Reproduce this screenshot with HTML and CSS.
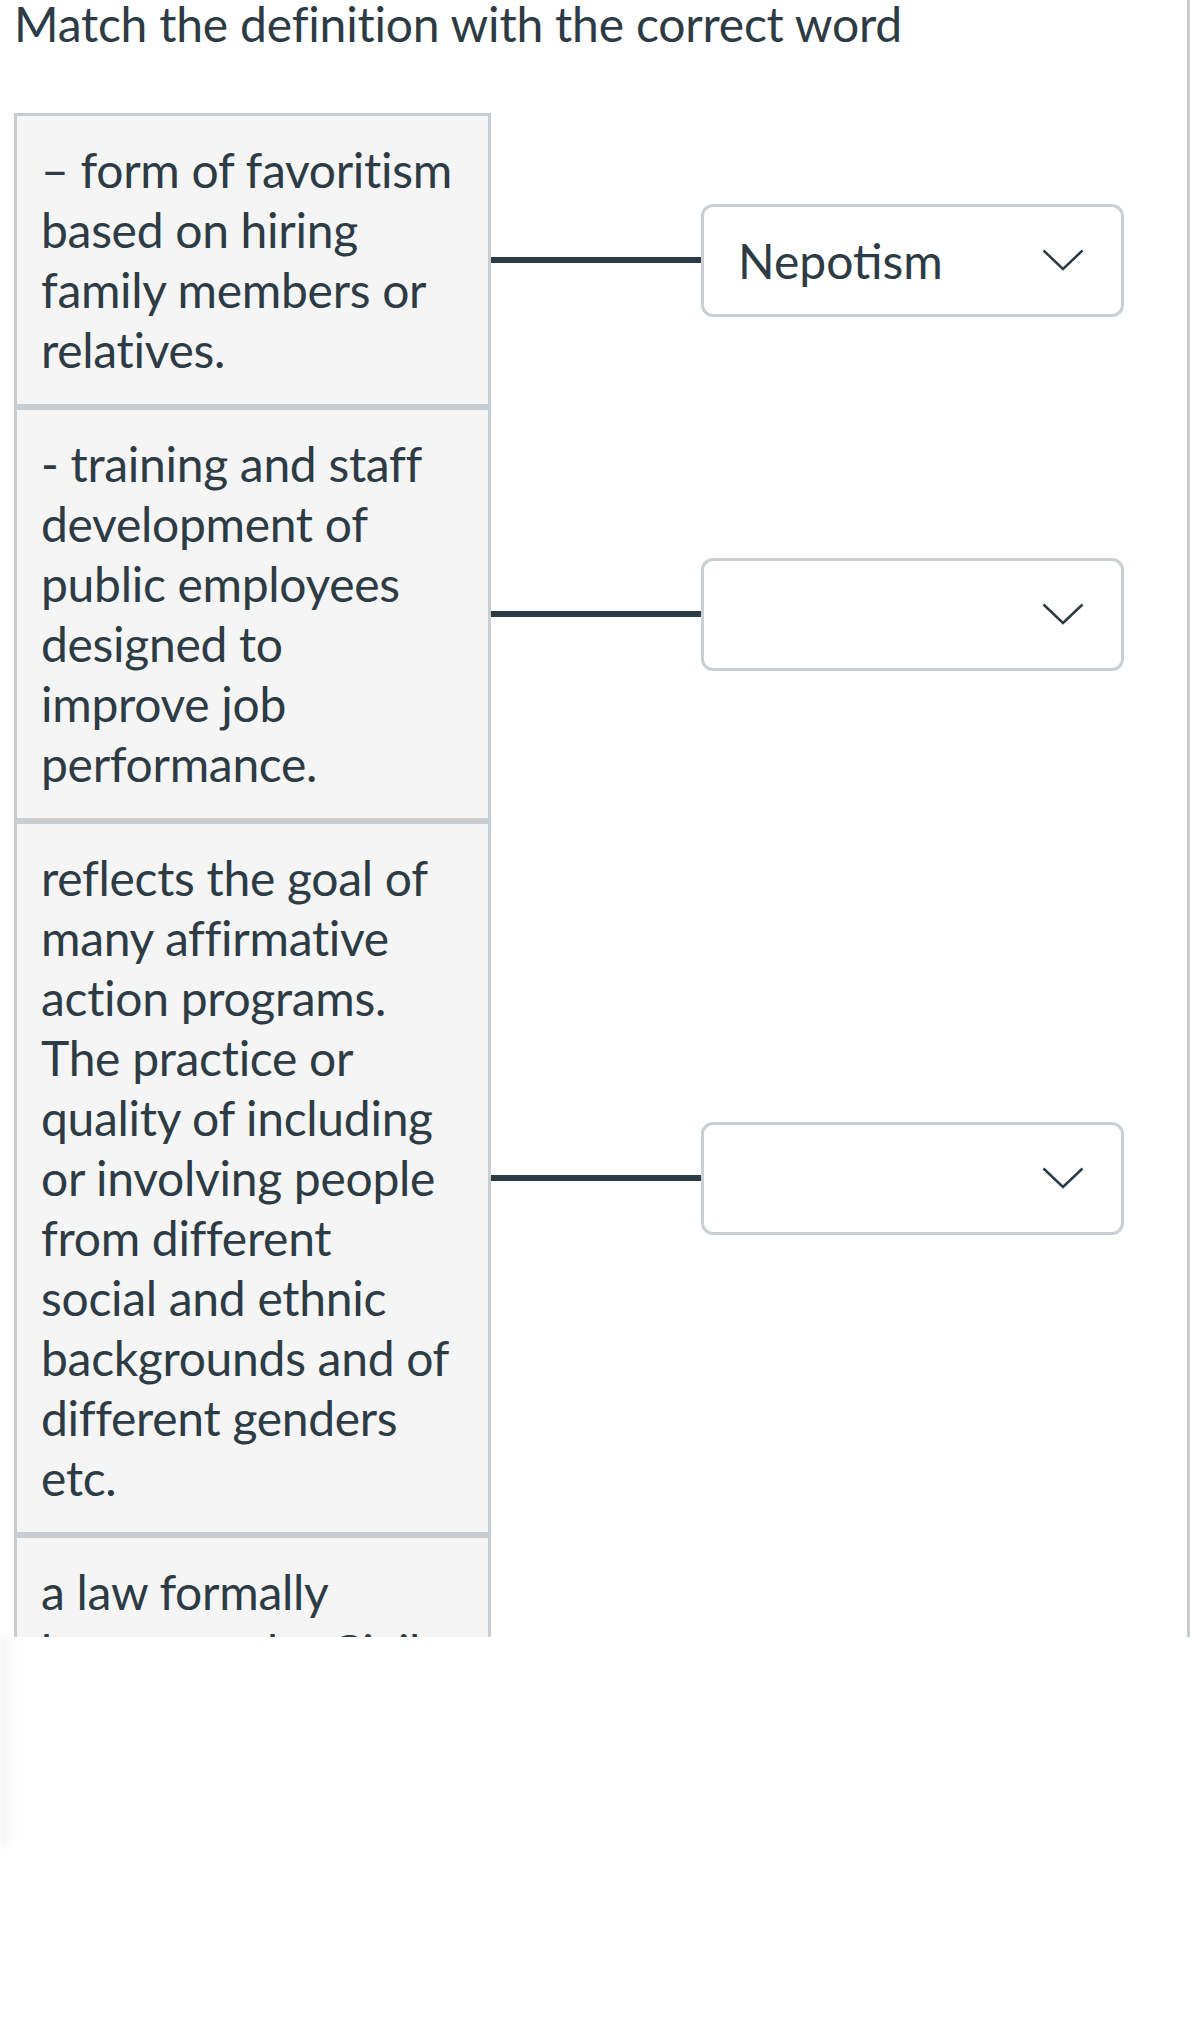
FILE: index.html
```html
<!DOCTYPE html>
<html lang="en">
<head>
<meta charset="utf-8">
<title>Matching question</title>
<link rel="stylesheet" href="styles.css">
</head>
<body>
<div class="question">
  <div class="question-text">Match the definition with the correct word</div>

  <div class="answers">
    <div class="answer-row">
      <div class="definition">– form of favoritism based on hiring family members or relatives.</div>
      <div class="connector"></div>
      <div class="word-select">
        <span class="word-value">Nepotism</span>
        <svg class="chevron" width="42" height="22" viewBox="0 0 42 22"><polyline points="1.5,1.5 21,20 40.5,1.5"/></svg>
      </div>
    </div>

    <div class="answer-row">
      <div class="definition">- training and staff development of public employees designed to improve job performance.</div>
      <div class="connector"></div>
      <div class="word-select">
        <span class="word-value"></span>
        <svg class="chevron" width="42" height="22" viewBox="0 0 42 22"><polyline points="1.5,1.5 21,20 40.5,1.5"/></svg>
      </div>
    </div>

    <div class="answer-row">
      <div class="definition">reflects the goal of many affirmative action programs. The practice or quality of including or involving people from different social and ethnic backgrounds and of different genders etc.</div>
      <div class="connector"></div>
      <div class="word-select">
        <span class="word-value"></span>
        <svg class="chevron" width="42" height="22" viewBox="0 0 42 22"><polyline points="1.5,1.5 21,20 40.5,1.5"/></svg>
      </div>
    </div>

    <div class="answer-row">
      <div class="definition">a law formally known as the Civil Rights Act of 1964, which prohibits employment discrimination based on race, color, religion, sex or national origin.</div>
      <div class="connector"></div>
      <div class="word-select">
        <span class="word-value"></span>
        <svg class="chevron" width="42" height="22" viewBox="0 0 42 22"><polyline points="1.5,1.5 21,20 40.5,1.5"/></svg>
      </div>
    </div>
  </div>
</div>
<div class="below">
  <div class="edge-shade"></div>
</div>
</body>
</html>
```

FILE: styles.css
```css
html, body {
  margin: 0;
  padding: 0;
  background: #ffffff;
}

body {
  font-family: Lato, "Noto Sans", sans-serif;
  color: #2d3b45;
}

/* Question panel, cut off at the bottom of the visible area */
.question {
  box-sizing: border-box;
  width: 1190px;
  height: 1637px;
  overflow: hidden;
  padding-left: 14px;
  border-right: 3px solid #c7cdd1;
}

.question-text {
  font-size: 48px;
  line-height: 48px;
  letter-spacing: -0.2px;
  margin-bottom: 65px;
}

.answers {
  display: flex;
  flex-direction: column;
}

.answer-row {
  display: flex;
  align-items: center;
}

.definition {
  box-sizing: border-box;
  flex: 0 0 477px;
  width: 477px;
  padding: 24px 34px 24px 24px;
  background: #f5f5f5;
  border: 3px solid #c7cdd1;
  font-size: 48px;
  line-height: 60px;
  letter-spacing: -0.3px;
}

.connector {
  flex: 0 0 210px;
  height: 6px;
  background: #2d3b45;
}

.word-select {
  box-sizing: border-box;
  flex: 0 0 423px;
  height: 113px;
  display: flex;
  align-items: center;
  justify-content: space-between;
  padding: 0 37px 0 34px;
  background: #ffffff;
  border: 3px solid #c9cfd3;
  border-radius: 12px;
  font-size: 48px;
}

.chevron {
  display: block;
  flex: none;
}

.chevron polyline {
  fill: none;
  stroke: #2d3b45;
  stroke-width: 2.5;
}

/* faint scroll shadow along the left edge under the panel */
.below {
  height: 388px;
}

.edge-shade {
  width: 18px;
  height: 210px;
  background: linear-gradient(to right, rgba(0, 0, 0, 0.04), rgba(0, 0, 0, 0));
  border-bottom-right-radius: 18px;
  filter: blur(2px);
}
```
